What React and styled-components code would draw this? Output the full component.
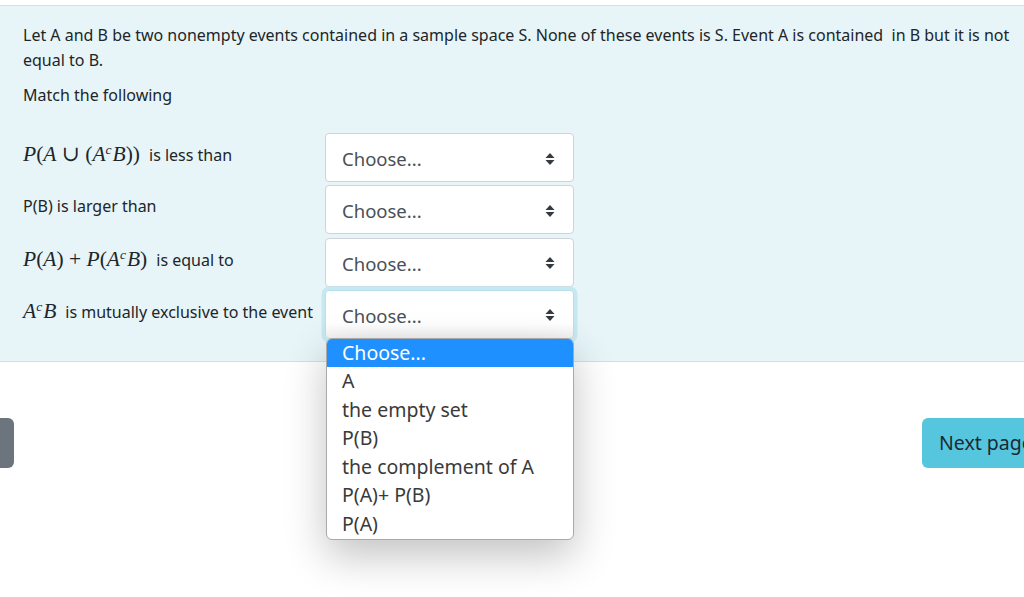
import React from "react";
import styled, { createGlobalStyle } from "styled-components";

const Global = createGlobalStyle`
  html, body { margin: 0; padding: 0; background: #fff; }
  body { font-family: "Noto Sans", "Open Sans", sans-serif; color: #212529; overflow: hidden; }
`;

const Page = styled.div`
  width: 1024px;
  height: 597px;
  overflow: hidden;
  padding-top: 5px;
  box-sizing: border-box;
`;

const Panel = styled.section`
  background: #e7f5f8;
  border-top: 1px solid #c4e5ec;
  border-bottom: 1px solid #c4e5ec;
  padding: 17px 0 22px 23px;
`;

const Para = styled.p`
  margin: 0 0 10px 0;
  font-size: 16px;
  line-height: 25px;
  padding-right: 8px;
`;

const Rows = styled.div`
  margin-top: 25px;
  display: flex;
  flex-direction: column;
  gap: 3.3px;
`;

const Row = styled.div`
  display: flex;
  align-items: flex-start;
`;

const Label = styled.div`
  width: 302px;
  padding-top: 9px;
  font-size: 16px;
  line-height: 24px;
  white-space: nowrap;
  display: flex;
  align-items: baseline;
  gap: 9px;
`;

const Math = styled.span`
  font-family: "Liberation Serif", "DejaVu Serif", serif;
  font-size: 21.5px;
  line-height: 24px;
  i { font-style: italic; }
  sup { font-size: 13.5px; font-style: italic; vertical-align: 7px; line-height: 0; margin-right: 1px; }
`;

const SelectWrap = styled.div`
  position: relative;
`;

const SelectBox = styled.div`
  width: 249px;
  height: 49px;
  box-sizing: border-box;
  background: ${(p) => (p.$focused ? "linear-gradient(#fff 70%, #f1f1f1)" : "#fff")};
  border: 1px solid ${(p) => (p.$focused ? "#b6e1ec" : "#ced4da")};
  border-radius: 4px;
  box-shadow: ${(p) => (p.$focused ? "0 0 0 3.5px #c6e9f1" : "none")};
  display: flex;
  align-items: center;
  justify-content: space-between;
  padding: 2px 18px 0 16px;
  font-size: 18.5px;
  color: #495057;
`;

const Arrows = () => (
  <svg width="10" height="14" viewBox="0 0 10 14">
    <path d="M5 1 L9.5 6 L0.5 6 Z" fill="#343a40" />
    <path d="M5 13 L9.5 8 L0.5 8 Z" fill="#343a40" />
  </svg>
);

const Dropdown = styled.ul`
  position: absolute;
  left: 1px;
  top: 48px;
  width: 248px;
  box-sizing: border-box;
  margin: 0;
  padding: 0 0 1px 0;
  list-style: none;
  background: #fff;
  border: 1px solid #a9a9a9;
  border-radius: 6px;
  overflow: hidden;
  box-shadow: 0 16px 42px rgba(0, 0, 0, 0.24);
  z-index: 10;
`;

const Option = styled.li`
  height: 28.5px;
  line-height: 28px;
  padding-left: 15px;
  font-size: 19.5px;
  color: ${(p) => (p.$active ? "#fff" : "#3a3a3a")};
  background: ${(p) => (p.$active ? "#1e90ff" : "transparent")};
  white-space: nowrap;
`;

const Footer = styled.div`
  margin-top: 56px;
  display: flex;
  justify-content: space-between;
`;

const Button = styled.button`
  height: 50px;
  border: none;
  border-radius: 6px;
  font-family: "Noto Sans", sans-serif;
  font-size: 19.5px;
  padding: 0 17px;
  white-space: nowrap;
  text-align: left;
  background: ${(p) => (p.$variant === "info" ? "#56c6de" : "#6c757d")};
  color: ${(p) => (p.$variant === "info" ? "#1b2a33" : "#fff")};
`;

const PrevButton = styled(Button)`
  margin-left: -175px;
  width: 189px;
  padding-left: 12px;
`;

const NextButton = styled(Button)`
  margin-right: -40px;
  width: 142px;
`;

const options = ["Choose...", "A", "the empty set", "P(B)", "the complement of A", "P(A)+ P(B)", "P(A)"];

const rows = [
  {
    label: (
      <>
        <Math><i>P</i>(<i>A</i> ∪ (<i>A</i><sup>c</sup><i>B</i>))</Math>
        <span>is less than</span>
      </>
    ),
  },
  { label: <span>P(B) is larger than</span> },
  {
    label: (
      <>
        <Math><i>P</i>(<i>A</i>) + <i>P</i>(<i>A</i><sup>c</sup><i>B</i>)</Math>
        <span>is equal to</span>
      </>
    ),
  },
  {
    label: (
      <>
        <Math><i>A</i><sup>c</sup><i>B</i></Math>
        <span>is mutually exclusive to the event</span>
      </>
    ),
    open: true,
  },
];

export default function App() {
  return (
    <Page>
      <Global />
      <Panel>
        <Para>
          Let A and B be two nonempty events contained in a sample space S. None of these events is S. Event A is contained&nbsp; in B but it is not equal to B.
        </Para>
        <Para>Match the following</Para>
        <Rows>
          {rows.map((r, i) => (
            <Row key={i}>
              <Label>{r.label}</Label>
              <SelectWrap>
                <SelectBox $focused={r.open}>
                  <span>Choose...</span>
                  <Arrows />
                </SelectBox>
                {r.open && (
                  <Dropdown>
                    {options.map((o, j) => (
                      <Option key={o} $active={j === 0}>{o}</Option>
                    ))}
                  </Dropdown>
                )}
              </SelectWrap>
            </Row>
          ))}
        </Rows>
      </Panel>
      <Footer>
        <PrevButton>Previous page</PrevButton>
        <NextButton $variant="info">Next page</NextButton>
      </Footer>
    </Page>
  );
}
